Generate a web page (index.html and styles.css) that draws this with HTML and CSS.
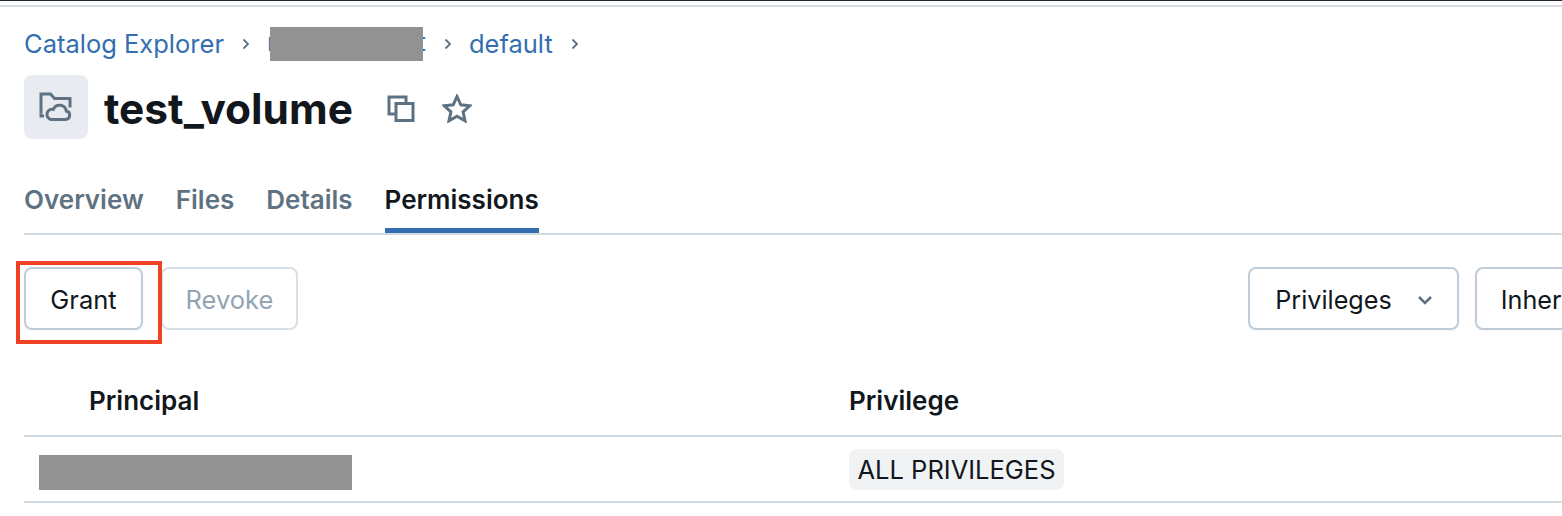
FILE: index.html
```html
<!DOCTYPE html>
<html lang="en">
<head>
    <meta charset="UTF-8">
    <meta name="viewport" content="width=device-width, initial-scale=1.0">
    <title>test_volume</title>
    <link rel="stylesheet" href="styles.css">
</head>
<body>
    <div class="window-edge"></div>

    <main class="page">
        <nav class="breadcrumb">
            <a href="#">Catalog Explorer</a>
            <svg class="crumb-sep" viewBox="0 0 8 12"><path d="M1.500 1.500 6 6l-4.500 4.500"/></svg>
            <a href="#">r<span class="redact redact-crumb"></span>t</a>
            <svg class="crumb-sep" viewBox="0 0 8 12"><path d="M1.500 1.500 6 6l-4.500 4.500"/></svg>
            <a href="#">default</a>
            <svg class="crumb-sep" viewBox="0 0 8 12"><path d="M1.500 1.500 6 6l-4.500 4.500"/></svg>
        </nav>

        <div class="title-row">
            <div class="title-icon">
                <svg viewBox="0 0 36 32" width="36" height="32">
                    <path d="M3 21.500V2h9.500l4 4.500H32v9"/>
                    <path d="M3 21.500V24h3"/>
                    <path d="M13 27.500h14.500a4.300 4.300 0 0 0 .8-8.500 6.800 6.800 0 0 0-13-1.600A5.100 5.100 0 0 0 13 27.500z"/>
                </svg>
            </div>
            <h1>test_volume</h1>
            <svg class="copy-icon" viewBox="0 0 28 27" width="28" height="27">
                <path d="M9 19H2V2h17v6"/>
                <rect x="9" y="8.500" width="17" height="17"/>
            </svg>
            <svg class="star-icon" viewBox="0 0 30 29" width="30" height="29">
                <path d="M15 2.500l3.800 8.300 9 1-6.700 6.100 1.900 8.900-8-4.600-8 4.600 1.900-8.900-6.700-6.100 9-1z"/>
            </svg>
        </div>

        <div class="tabs">
            <a href="#" class="tab">Overview</a>
            <a href="#" class="tab">Files</a>
            <a href="#" class="tab">Details</a>
            <a href="#" class="tab active">Permissions</a>
        </div>

        <div class="toolbar">
            <div class="highlighted">
                <button class="btn btn-grant">Grant</button>
                <span class="red-box"></span>
            </div>
            <button class="btn btn-revoke" disabled>Revoke</button>
            <button class="btn btn-filter">
                Privileges
                <svg viewBox="0 0 16 10" width="16" height="10"><path d="M2 2l6 6 6-6"/></svg>
            </button>
            <button class="btn btn-filter">Inherited privileges</button>
        </div>

        <div class="table">
            <div class="table-head">
                <div class="col-principal">Principal</div>
                <div class="col-privilege">Privilege</div>
            </div>
            <div class="table-row">
                <div class="redact redact-principal"></div>
                <div class="col-privilege"><span class="chip">ALL PRIVILEGES</span></div>
            </div>
        </div>
    </main>
</body>
</html>
```

FILE: styles.css
```css
:root {
    --link-color: #336fb0;
    --text-color: #11171c;
    --muted-color: #5f7281;
    --line-color: #d1d9e1;
    --border-color: #c0cdd8;
}
html, body {
    overflow: hidden;
}
body {
    margin: 0;
    background-color: #ffffff;
    color: var(--text-color);
    font-family: Inter, "Noto Sans", sans-serif;
}
.window-edge {
    height: 7px;
    border-top: 1px solid #22262c;
    border-bottom: 2px solid #d6dae6;
    box-sizing: border-box;
}
.page {
    width: 1755px;
    padding-left: 24px;
    box-sizing: border-box;
}
.redact {
    background-color: #929292;
}
.breadcrumb {
    display: flex;
    align-items: center;
    height: 34px;
    margin-top: 19px;
    font-size: 25.5px;
}
.breadcrumb a {
    color: var(--link-color);
    text-decoration: none;
    white-space: nowrap;
}
.crumb-sep {
    width: 8px;
    height: 12px;
    margin: 1px 17px 0 18px;
    fill: none;
    stroke: var(--muted-color);
    stroke-width: 1.8;
}
.redact-crumb {
    position: relative;
    top: 1px;
    display: inline-block;
    width: 153px;
    height: 34px;
    margin: 0 -5px 0 -7px;
    vertical-align: -9px;
}
.title-row {
    display: flex;
    align-items: center;
    height: 64px;
    margin-top: 15px;
}
.title-icon {
    display: flex;
    align-items: center;
    justify-content: center;
    width: 64px;
    height: 64px;
    border-radius: 8px;
    background-color: #e8ecf0;
}
.title-icon svg, .copy-icon, .star-icon {
    fill: none;
    stroke: var(--muted-color);
    stroke-width: 3;
}
.title-icon svg {
    margin-top: 2px;
}
h1 {
    margin: 3px 34px 0 16px;
    font-size: 42.4px;
    font-weight: 700;
    line-height: 61px;
}
.copy-icon, .star-icon {
    margin-top: 3px;
}
.star-icon {
    margin-left: 27px;
}
.tabs {
    display: flex;
    gap: 32px;
    height: 70px;
    margin-top: 26px;
    border-bottom: 2px solid var(--line-color);
    box-sizing: border-box;
}
.tab {
    height: 68px;
    box-sizing: border-box;
    padding-top: 19px;
    color: var(--muted-color);
    font-size: 26px;
    font-weight: 600;
    text-decoration: none;
}
.tab.active {
    color: var(--text-color);
    border-bottom: 5px solid var(--link-color);
}
.toolbar {
    display: flex;
    gap: 16px;
    margin-top: 32px;
}
.btn {
    height: 63px;
    padding-top: 2px;
    border: 2px solid var(--border-color);
    border-radius: 8px;
    background-color: #ffffff;
    box-shadow: 0 1px 2px rgba(0, 0, 0, 0.05);
    color: var(--text-color);
    font-family: inherit;
    font-size: 25.5px;
    white-space: nowrap;
}
.highlighted {
    position: relative;
    display: flex;
}
.btn-grant {
    width: 119px;
}
.red-box {
    position: absolute;
    top: -6px;
    right: -19px;
    bottom: -14px;
    left: -8px;
    border: 4px solid #ef4123;
}
.btn-revoke {
    width: 137px;
    margin-left: 2px;
    border-color: #d8e0e7;
    box-shadow: none;
    color: #92a4b3;
}
.btn-filter {
    display: flex;
    align-items: center;
    gap: 26px;
    padding: 2px 24px 0;
    box-sizing: border-box;
    font-size: 25.2px;
}
.btn-filter svg {
    fill: none;
    stroke: var(--muted-color);
    stroke-width: 2.5;
}
.btn-revoke + .btn-filter {
    gap: 25px;
    margin-left: auto;
    padding-left: 25px;
}
.table {
    margin-top: 35px;
}
.table-head, .table-row {
    display: flex;
    box-sizing: border-box;
    border-bottom: 2px solid var(--line-color);
}
.table-head {
    align-items: center;
    height: 72px;
    font-size: 26px;
    font-weight: 600;
}
.table-row {
    align-items: center;
    height: 66px;
}
.col-principal {
    width: 825px;
    padding-left: 65px;
    box-sizing: border-box;
}
.redact-principal {
    width: 313px;
    height: 35px;
    margin: 6px 497px 0 15px;
}
.chip {
    display: inline-block;
    padding: 0 8.5px;
    border-radius: 8px;
    background-color: #f1f2f4;
    font-size: 25.5px;
    line-height: 41px;
}
```
